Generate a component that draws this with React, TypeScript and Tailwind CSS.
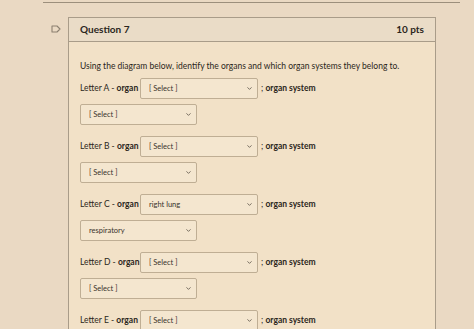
import { ChevronDown } from 'lucide-react';

const rows = [
  { letter: 'A', organ: '[ Select ]', system: '[ Select ]' },
  { letter: 'B', organ: '[ Select ]', system: '[ Select ]' },
  { letter: 'C', organ: 'right lung', system: 'respiratory' },
  { letter: 'D', organ: '[ Select ]', system: '[ Select ]' },
  { letter: 'E', organ: '[ Select ]', system: '[ Select ]' },
];

const FakeSelect = ({ value, width }: { value: string; width: string }) => (
  <div
    className={`${width} h-[21px] flex items-center justify-between pl-[8px] pr-[4px] border border-[#bfae94] rounded-[2px] bg-[#f4e6cf]`}
  >
    <span className="text-[7.5px] text-[#3a342c]">{value}</span>
    <ChevronDown className="w-[7px] h-[7px] text-[#4a4238]" strokeWidth={2.5} />
  </div>
);

export default function App() {
  return (
    <div
      className="w-[474px] h-[329px] overflow-hidden bg-[#ead9c3] text-[#2b2620]"
      style={{ fontFamily: 'Lato, "Open Sans", sans-serif' }}
    >
      <div className="ml-[43px] w-[417px] h-[3px] border-b border-[#9c8f7c]" />
      <div className="flex mt-[14px]">
        <div className="w-[68px] flex justify-end pr-[7px] pt-[8px]">
          <svg width="10" height="8" viewBox="0 0 10 8" fill="none">
            <path d="M1 1 H6 L9 4 L6 7 H1 Z" stroke="#8c8070" strokeWidth="1.1" strokeLinejoin="round" />
          </svg>
        </div>
        <div className="w-[368px] h-[320px] border-l border-r border-t border-[#a99c89] bg-[#f2e1c7]">
          <div className="h-[24px] flex items-center justify-between px-[11px] bg-[#eadcc7] border-b border-[#a99c89]">
            <span className="text-[10px] font-bold">Question 7</span>
            <span className="text-[10px] font-bold">10 pts</span>
          </div>
          <div className="pl-[11px] pt-[18px]">
            <p className="text-[8.5px] leading-[12px]">
              Using the diagram below, identify the organs and which organ systems they belong to.
            </p>
            <div className="mt-[6px] flex flex-col gap-[11px]">
              {rows.map((r) => (
                <div key={r.letter} className="flex flex-col gap-[5px]">
                  <div className="flex items-center text-[8.5px]">
                    <span className="w-[60px]">
                      Letter {r.letter} - <b>organ</b>
                    </span>
                    <FakeSelect value={r.organ} width="w-[118px]" />
                    <span className="ml-[3px]">
                      ; <b>organ system</b>
                    </span>
                  </div>
                  <FakeSelect value={r.system} width="w-[117px]" />
                </div>
              ))}
            </div>
          </div>
        </div>
      </div>
    </div>
  );
}
